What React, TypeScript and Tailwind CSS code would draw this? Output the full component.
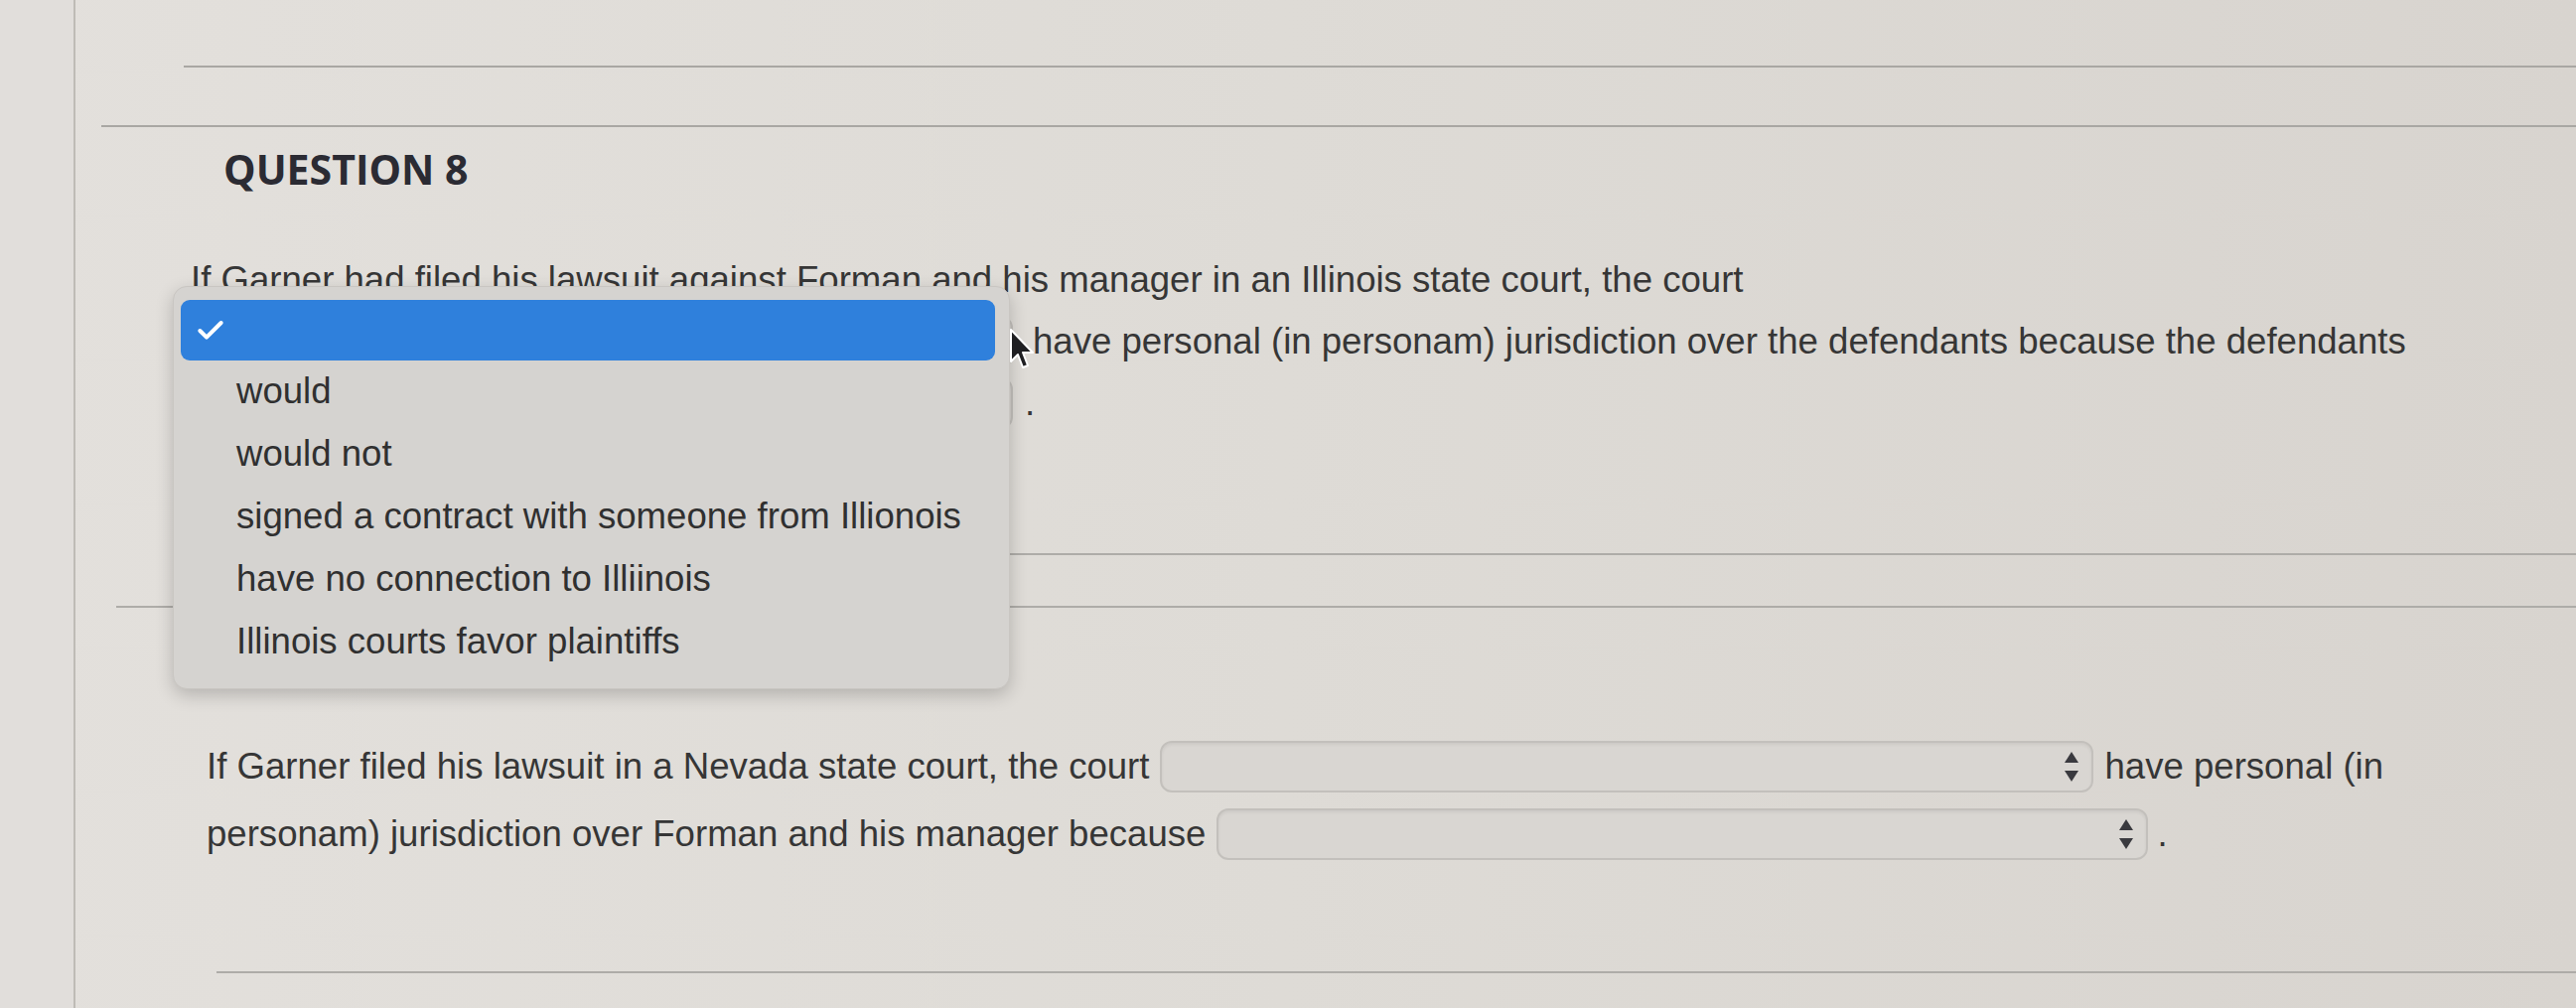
import { Check } from 'lucide-react';

const font = { fontFamily: '"Liberation Sans", Arial, sans-serif' };

function Stepper() {
  return (
    <svg width="14" height="30" viewBox="0 0 14 30" className="shrink-0">
      <path d="M7 0 L14 11 L0 11 Z" fill="#3a3a3f" />
      <path d="M0 19 L14 19 L7 30 Z" fill="#3a3a3f" />
    </svg>
  );
}

function Select({ w, h = 'h-[52px]' }: { w: string; h?: string }) {
  return (
    <div
      className={`${w} ${h} shrink-0 flex items-center justify-end pr-[13px] rounded-[12px] border-2 border-[#c3c0bc] bg-[#d9d6d2] shadow-[inset_0_2px_3px_rgba(0,0,0,0.06)]`}
    >
      <Stepper />
    </div>
  );
}

const options = [
  'would',
  'would not',
  'signed a contract with someone from Illionois',
  'have no connection to Illiinois',
  'Illinois courts favor plaintiffs',
];

export default function App() {
  return (
    <div
      className="relative w-[2594px] h-[1015px] overflow-hidden flex bg-linear-to-r from-[#e3e0dc] via-[#dedbd6] to-[#d8d4cf] text-[36.6px] leading-none text-[#363636]"
      style={font}
    >
      {/* page gutter */}
      <div className="w-[76px] shrink-0 bg-[#e1dedb] border-r-2 border-[#bebbb6]" />

      <div className="flex-1 flex flex-col">
        <div className="mt-[66px] ml-[109px] border-t-2 border-[#a9a7a3]" />
        <div className="mt-[58px] ml-[26px] border-t-2 border-[#a9a7a3]" />

        <h2
          className="mt-[22px] ml-[149px] text-[41px] font-bold leading-none text-[#2b2b33]"
          style={{ fontFamily: '"Open Sans", sans-serif' }}
        >
          QUESTION 8
        </h2>

        {/* question 1 */}
        <div className="ml-[116px] mt-[60px] flex flex-col">
          <div className="h-[62px] flex items-center">
            If Garner had filed his lawsuit against Forman and his manager in an Illinois state court, the court
          </div>
          <div className="h-[62px] flex items-center gap-[20px]">
            <Select w="w-[828px]" />
            <span>have personal (in personam) jurisdiction over the defendants because the defendants</span>
          </div>
          <div className="h-[62px] flex items-center gap-[12px]">
            <Select w="w-[828px]" />
            <span>.</span>
          </div>
        </div>

        <div className="mt-[120px] ml-[424px] border-t-2 border-[#aeaca8]" />
        <div className="mt-[51px] ml-[41px] border-t-2 border-[#aeaca8]" />

        {/* question 2 */}
        <div className="ml-[132px] mt-[126px] flex flex-col">
          <div className="h-[68px] flex items-center gap-[11px]">
            <span>If Garner filed his lawsuit in a Nevada state court, the court</span>
            <Select w="w-[940px]" h="h-[52px]" />
            <span>have personal (in</span>
          </div>
          <div className="h-[68px] flex items-center gap-[11px]">
            <span>personam) jurisdiction over Forman and his manager because</span>
            <Select w="w-[938px]" h="h-[52px]" />
            <span className="-ml-[2px]">.</span>
          </div>
        </div>

        <div className="mt-[104px] ml-[142px] border-t-2 border-[#aeaca8]" />
      </div>

      {/* open dropdown menu */}
      <div className="absolute left-[174px] top-[288px] w-[843px] h-[406px] rounded-[14px] bg-[#d5d3d0] border border-[#c9c6c2] shadow-[0_6px_18px_rgba(0,0,0,0.2)] pt-[13px] pl-[7px] pr-[14px] flex flex-col">
        <div className="h-[61px] rounded-[9px] bg-[#2f80dc] flex items-center pl-[14px]">
          <Check size={32} strokeWidth={3} className="text-white" />
        </div>
        {options.map((o) => (
          <div key={o} className="h-[63px] flex items-center pl-[56px] text-[#303030]">
            {o}
          </div>
        ))}
      </div>

      {/* mouse pointer */}
      <svg className="absolute left-[1016px] top-[330px]" width="28" height="44" viewBox="0 0 28 44">
        <path
          d="M2 2 L2 34 L9 27 L14 40 L19 38 L14 25 L24 25 Z"
          fill="#1f1f22"
          stroke="#ffffff"
          strokeWidth="2"
          strokeLinejoin="round"
        />
      </svg>
    </div>
  );
}
